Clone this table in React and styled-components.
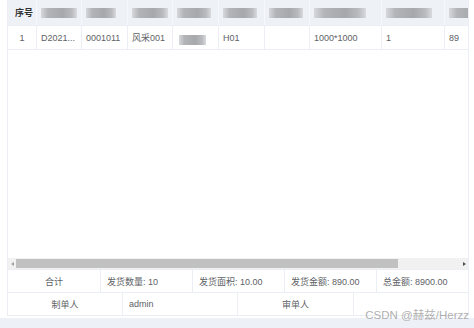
import React from "react";
import styled, { createGlobalStyle } from "styled-components";

const GlobalStyle = createGlobalStyle`
  html, body { margin: 0; padding: 0; background: #fff; }
  body { font-family: "Liberation Sans", "Noto Sans CJK SC", sans-serif; }
`;

const Page = styled.div`
  width: 474px;
  height: 328px;
  position: relative;
  overflow: hidden;
  background: #fff;
  display: flex;
  flex-direction: column;
`;

const Table = styled.div`
  margin-left: 7px;
  width: 462px;
  height: 258px;
  border-left: 1px solid #ebeef5;
  border-right: 1px solid #ebeef5;
  box-sizing: border-box;
  overflow: hidden;
  display: flex;
  flex-direction: column;
`;

const Row = styled.div`
  display: flex;
  height: ${(p) => p.$h}px;
  background: ${(p) => (p.$head ? "#eef1f6" : "#fff")};
  border-bottom: 1px solid #ebeef5;
  box-sizing: border-box;
  flex-shrink: 0;
`;

const Cell = styled.div`
  width: ${(p) => p.$w}px;
  flex-shrink: 0;
  box-sizing: border-box;
  border-right: 1px solid ${(p) => (p.$head ? "#f7f8fb" : "#ebeef5")};
  display: flex;
  align-items: center;
  justify-content: ${(p) => (p.$center ? "center" : "flex-start")};
  padding-left: ${(p) => (p.$center ? 0 : 4)}px;
  font-size: 9px;
  color: #606266;
  white-space: nowrap;
  overflow: hidden;
`;

const HeadLabel = styled.span`
  font-weight: bold;
  color: #333;
  font-size: 9px;
  padding-left: 3px;
`;

const Blur = styled.div`
  width: ${(p) => p.$w}px;
  height: 10px;
  background: linear-gradient(90deg, #d6d8dc 0%, #b2b4b8 20%, #a6a8ac 60%, #b8babe 85%, #d8dadd 100%);
  filter: blur(0.6px);
`;

const Body = styled.div`
  flex: 1;
`;

const Scrollbar = styled.div`
  margin-left: 7px;
  width: 462px;
  height: 11px;
  background: #f1f1f1;
  border-left: 1px solid #ebeef5;
  border-right: 1px solid #ebeef5;
  box-sizing: border-box;
  display: flex;
  align-items: center;
  flex-shrink: 0;
`;

const Arrow = styled.div`
  width: 8px;
  height: 11px;
  display: flex;
  align-items: center;
  justify-content: center;
  &::after {
    content: "";
    border-top: 2px solid transparent;
    border-bottom: 2px solid transparent;
    ${(p) =>
      p.$dir === "left"
        ? "border-right: 3px solid #a3a3a3;"
        : "border-left: 3px solid #505050;"}
  }
`;

const Track = styled.div`
  flex: 1;
  height: 9px;
  display: flex;
`;

const Thumb = styled.div`
  height: 100%;
  background: #c1c1c1;
`;

const Summary = styled.div`
  margin-left: 7px;
  width: 462px;
  border: 1px solid #ebeef5;
  border-top: none;
  box-sizing: border-box;
`;

const SumRow = styled.div`
  display: flex;
  height: 23px;
  border-top: 1px solid #ebeef5;
  box-sizing: border-box;
`;

const SumCell = styled.div`
  width: ${(p) => p.$w}px;
  flex: ${(p) => (p.$w ? "none" : 1)};
  box-sizing: border-box;
  border-right: ${(p) => (p.$last ? "none" : "1px solid #ebeef5")};
  display: flex;
  align-items: center;
  justify-content: ${(p) => (p.$center ? "center" : "flex-start")};
  padding-left: ${(p) => (p.$center ? 0 : 6)}px;
  font-size: 9px;
  color: #606266;
  white-space: nowrap;
`;

const Band = styled.div`
  margin-top: 2px;
  flex: 1;
  background: #eef0f7;
`;

const Watermark = styled.div`
  position: absolute;
  right: 5px;
  bottom: 6px;
  font-size: 11.5px;
  color: rgba(160, 160, 160, 0.85);
  font-family: "Liberation Sans", "Noto Sans CJK SC", sans-serif;
`;

const cols = [29, 45, 46, 45, 46, 46, 45, 72, 63, 60];

const headBlur = [null, 36, 30, 36, 34, 34, 34, 52, 46, 40];

const rowData = [
  { t: "1", c: true },
  { t: "D2021..." },
  { t: "0001011" },
  { t: "风采001" },
  { blur: 27 },
  { t: "H01" },
  { t: "" },
  { t: "1000*1000" },
  { t: "1" },
  { t: "89" },
];

export default function App() {
  return (
    <Page>
      <GlobalStyle />
      <Table>
        <Row $h={26} $head>
          {cols.map((w, i) => (
            <Cell key={i} $w={w} $head>
              {i === 0 ? <HeadLabel>序号</HeadLabel> : <Blur $w={headBlur[i]} />}
            </Cell>
          ))}
        </Row>
        <Row $h={24}>
          {rowData.map((d, i) => (
            <Cell key={i} $w={cols[i]} $center={d.c}>
              {d.blur ? <Blur $w={d.blur} style={{ marginLeft: 2, marginTop: 4 }} /> : d.t}
            </Cell>
          ))}
        </Row>
        <Body />
      </Table>
      <Scrollbar>
        <Arrow $dir="left" />
        <Track>
          <Thumb style={{ width: "86%" }} />
        </Track>
        <Arrow $dir="right" />
      </Scrollbar>
      <Summary>
        <SumRow>
          <SumCell $w={93} $center>合计</SumCell>
          <SumCell $w={92}>发货数量: 10</SumCell>
          <SumCell $w={92}>发货面积: 10.00</SumCell>
          <SumCell $w={92}>发货金额: 890.00</SumCell>
          <SumCell $last>总金额: 8900.00</SumCell>
        </SumRow>
        <SumRow>
          <SumCell $w={115} $center>制单人</SumCell>
          <SumCell $w={115}>admin</SumCell>
          <SumCell $w={116} $center>审单人</SumCell>
          <SumCell $last />
        </SumRow>
      </Summary>
      <Band />
      <Watermark>CSDN @赫兹/Herzz</Watermark>
    </Page>
  );
}
